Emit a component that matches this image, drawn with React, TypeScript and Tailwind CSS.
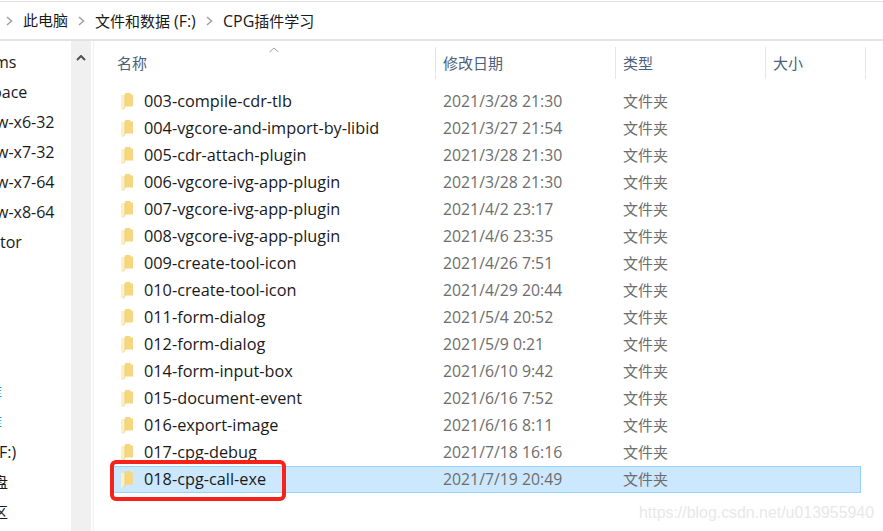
const files = [
  ['003-compile-cdr-tlb', '2021/3/28 21:30'],
  ['004-vgcore-and-import-by-libid', '2021/3/27 21:54'],
  ['005-cdr-attach-plugin', '2021/3/28 21:30'],
  ['006-vgcore-ivg-app-plugin', '2021/3/28 21:30'],
  ['007-vgcore-ivg-app-plugin', '2021/4/2 23:17'],
  ['008-vgcore-ivg-app-plugin', '2021/4/6 23:35'],
  ['009-create-tool-icon', '2021/4/26 7:51'],
  ['010-create-tool-icon', '2021/4/29 20:44'],
  ['011-form-dialog', '2021/5/4 20:52'],
  ['012-form-dialog', '2021/5/9 0:21'],
  ['014-form-input-box', '2021/6/10 9:42'],
  ['015-document-event', '2021/6/16 7:52'],
  ['016-export-image', '2021/6/16 8:11'],
  ['017-cpg-debug', '2021/7/18 16:16'],
  ['018-cpg-call-exe', '2021/7/19 20:49'],
];

const font = '[font-family:"Open_Sans","Noto_Sans_CJK_SC",sans-serif]';

function Chevron() {
  return (
    <svg width="7" height="10" viewBox="0 0 7 10" className="shrink-0">
      <path d="M1 1l4.500 4L1 9" fill="none" stroke="#a0a0a0" strokeWidth="1.500" />
    </svg>
  );
}

function FolderIcon() {
  return (
    <svg width="12" height="17" viewBox="0 0 12 17" className="shrink-0">
      <path d="M4 .5Q4 0 5 0h4l1 1.500h1.500q.5 0 .5 .5v11.500H4z" fill="#f6d77f" />
      <path d="M0 2h4v11.500l-1.500 3H0z" fill="#fdf0c0" />
      <path d="M4 1.500v12L2.500 16.500" fill="none" stroke="#e8c766" strokeWidth="0.700" />
    </svg>
  );
}

export default function App() {
  return (
    <div className={`w-[883px] h-[531px] overflow-hidden bg-white text-[15px] text-[#1a1a1a] ${font}`}>
      {/* breadcrumb */}
      <div className="h-[40px] mt-px border-t border-b-2 border-t-[#e3e3e3] border-b-[#e3e3e3] flex items-center pl-[6px]">
        <Chevron />
        <span className="ml-[10px] w-[45px]">此电脑</span>
        <span className="ml-[10px]"><Chevron /></span>
        <span className="ml-[10px] w-[108px]">文件和数据 <span className="text-[16px]">(F:)</span></span>
        <span className="ml-[3px]"><Chevron /></span>
        <span className="ml-[10px]"><span className="text-[16px]">CPG</span>插件学习</span>
      </div>

      <div className="flex h-[490px]">
        {/* nav pane, clipped on the left */}
        <div className="w-[71px] overflow-hidden whitespace-nowrap pt-[6px] text-[16px]">
          <div className="h-[30px] leading-[30px] -ml-[6px]">ms</div>
          <div className="h-[30px] leading-[30px] -ml-[8px]">pace</div>
          <div className="h-[30px] leading-[30px] -ml-[4px]">w-x6-32</div>
          <div className="h-[30px] leading-[30px] -ml-[4px]">w-x7-32</div>
          <div className="h-[30px] leading-[30px] -ml-[4px]">w-x7-64</div>
          <div className="h-[30px] leading-[30px] -ml-[4px]">w-x8-64</div>
          <div className="h-[30px] leading-[30px]">tor</div>
          <div className="h-[120px]" />
          <div className="h-[30px] leading-[30px] -ml-[13px] text-[#2f8fe0] text-[15px]">库</div>
          <div className="h-[30px] leading-[30px] -ml-[13px] text-[#2f8fe0] text-[15px]">库</div>
          <div className="h-[30px] leading-[30px] -ml-[1px]">F:)</div>
          <div className="h-[30px] leading-[30px] -ml-[7px] text-[15px]">盘</div>
          <div className="h-[30px] leading-[30px] -ml-[7px] text-[15px]">区</div>
        </div>

        {/* scrollbar */}
        <div className="w-[20px] bg-[#f0f0f0] flex justify-center pt-[14px]">
          <svg width="10" height="6" viewBox="0 0 10 6">
            <path d="M1 5l4-4 4 4" fill="none" stroke="#505050" strokeWidth="2" />
          </svg>
        </div>

        {/* file list */}
        <div className="relative flex-1 ml-[2px] border-l border-[#f0f0f0] pt-[6px]">
          <svg width="10" height="6" viewBox="0 0 10 6" className="absolute left-[175px] top-[6px]">
            <path d="M.5 5L5 1l4.500 4" fill="none" stroke="#a0a0a0" />
          </svg>
          <div className="flex h-[32px] items-center text-[#4c607a]">
            <div className="w-[342px] h-full pl-[23px] leading-[32px] border-r border-[#e5e5e5]">名称</div>
            <div className="w-[180px] h-full pl-[7px] leading-[32px] border-r border-[#e5e5e5]">修改日期</div>
            <div className="w-[150px] h-full pl-[7px] leading-[32px] border-r border-[#e5e5e5]">类型</div>
            <div className="w-[100px] h-full pl-[7px] leading-[32px] border-r border-[#e5e5e5]">大小</div>
          </div>
          <div className="mt-[9px]">
            {files.map(([name, date], i) => {
              const selected = i === files.length - 1;
              return (
                <div
                  key={name}
                  className={`flex items-center h-[27px] w-[749px] ml-[18px] border ${selected ? 'bg-[#cce8ff] border-[#99d1ff]' : 'border-transparent'}`}
                >
                  <div className="w-[323px] flex items-center pl-[8px] gap-[11px]">
                    <FolderIcon />
                    <span className="text-[16.300px]">{name}</span>
                  </div>
                  <div className="w-[180px] pl-[7px] text-[15.800px] text-[#6d6d6d]">{date}</div>
                  <div className="pl-[7px] text-[#6d6d6d]">文件夹</div>
                </div>
              );
            })}
          </div>

          {/* red annotation box */}
          <div className="absolute left-[16px] top-[419px] w-[176px] h-[41px] border-[4px] border-[#f5231c] rounded-[6px]" />
          {/* watermark */}
          <div className="absolute right-[9px] bottom-[6px] text-[#e8e8e8] text-[15.900px] [font-family:'Liberation_Sans',sans-serif]">
            https://blog.csdn.net/u013955940
          </div>
        </div>
      </div>
    </div>
  );
}
